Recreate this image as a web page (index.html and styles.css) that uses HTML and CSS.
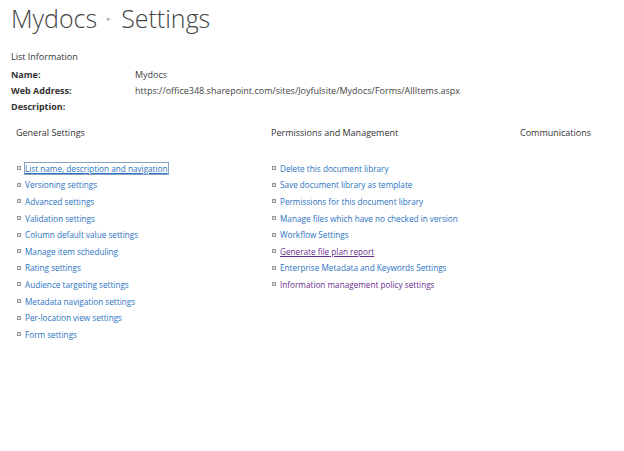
FILE: index.html
```html
<!DOCTYPE html>
<html>
<head>
<meta charset="utf-8">
<link rel="stylesheet" href="styles.css">
</head>
<body>
<div class="page">
  <h1 class="title"><span>Mydocs</span><span class="sep">&#9656;</span><span>Settings</span></h1>
  <div class="info">
    <div class="info-head">List Information</div>
    <div class="info-row"><span class="lbl">Name:</span><span class="val">Mydocs</span></div>
    <div class="info-row"><span class="lbl">Web Address:</span><span class="val">https://office348.sharepoint.com/sites/Joyfulsite/Mydocs/Forms/AllItems.aspx</span></div>
    <div class="info-row"><span class="lbl">Description:</span><span class="val"></span></div>
  </div>
  <div class="cols">
    <div class="col col-general">
      <div class="col-head">General Settings</div>
      <ul class="links">
        <li><a class="focus">List name, description and navigation</a></li>
        <li><a>Versioning settings</a></li>
        <li><a>Advanced settings</a></li>
        <li><a>Validation settings</a></li>
        <li><a>Column default value settings</a></li>
        <li><a>Manage item scheduling</a></li>
        <li><a>Rating settings</a></li>
        <li><a>Audience targeting settings</a></li>
        <li><a>Metadata navigation settings</a></li>
        <li><a>Per-location view settings</a></li>
        <li><a>Form settings</a></li>
      </ul>
    </div>
    <div class="col col-perm">
      <div class="col-head">Permissions and Management</div>
      <ul class="links">
        <li><a>Delete this document library</a></li>
        <li><a>Save document library as template</a></li>
        <li><a>Permissions for this document library</a></li>
        <li><a>Manage files which have no checked in version</a></li>
        <li><a>Workflow Settings</a></li>
        <li><a class="hover">Generate file plan report</a></li>
        <li><a>Enterprise Metadata and Keywords Settings</a></li>
        <li><a class="visited">Information management policy settings</a></li>
      </ul>
    </div>
    <div class="col col-comm">
      <div class="col-head">Communications</div>
    </div>
  </div>
</div>
</body>
</html>
```
FILE: styles.css
```css
html, body { margin: 0; padding: 0; background: #fff; }
body { font-family: "Open Sans", "Noto Sans", sans-serif; color: #444; font-size: 9px; }
.page { padding: 0 0 0 11px; }
.title { margin: 0; padding-top: 2px; font-weight: 300; font-size: 25px; line-height: 28px; color: #444; display: flex; align-items: center; }
.title .sep { font-size: 7px; color: #aaa; margin: 3px 10px 0 10px; }
.info { margin-top: 16px; }
.info-head { line-height: 16px; margin-bottom: 2px; color: #333; }
.info-row { display: flex; line-height: 16px; }
.lbl { width: 124px; font-weight: bold; color: #333; }
.val { color: #444; }
.cols { display: flex; margin-top: 11px; padding-left: 5px; }
.col-general { width: 255px; }
.col-perm { width: 249px; }
.col-head { font-size: 9px; line-height: 14px; color: #333; margin-bottom: 20px; }
.links { list-style: none; margin: 0; padding: 0; font-size: 8.2px; }
.links li { display: flex; align-items: center; height: 16.6px; }
.links li::before { content: ""; width: 2px; height: 2px; border: 1px solid #999; background: #e4e4e4; margin-right: 4px; margin-left: 1px; }
.links a { color: #2a73c2; }
.links a.focus { outline: 1px solid #8aa0c0; text-decoration: underline; }
.links a.hover { color: #6b2f8e; text-decoration: underline; }
.links a.visited { color: #6b2f8e; }
```
